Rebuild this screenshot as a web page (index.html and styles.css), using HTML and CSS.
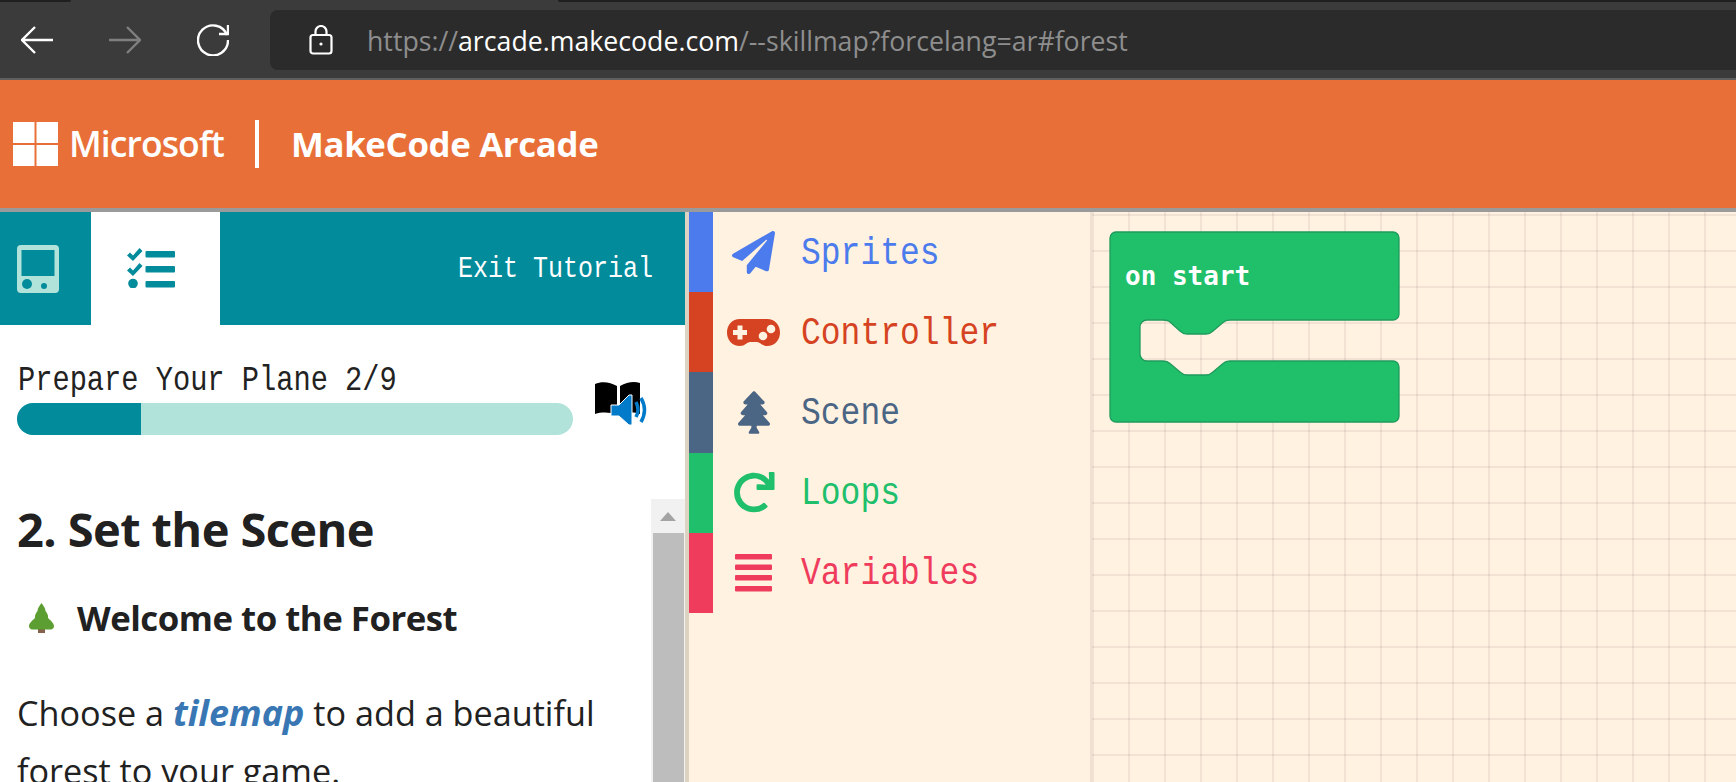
FILE: index.html

```html
<!DOCTYPE html>
<html>
<head>
  <title>MakeCode Arcade</title>
  <link rel="stylesheet" href="styles.css">
</head>
<body>

<div class="browser">
  <div class="tab-strip">
    <div class="tab-dark tab-first"></div>
    <div class="tab-gap"></div>
    <div class="tab-dark tab-rest"></div>
  </div>
  <div class="toolbar">
    <svg class="nav-icon" viewBox="0 0 32 28" fill="none" stroke="#fff" stroke-width="2.4">
      <path d="M1 14H32M14 1L1 14L14 27"/>
    </svg>
    <svg class="nav-icon" viewBox="0 0 32 28" fill="none" stroke="#7f7f7f" stroke-width="2.4">
      <path d="M0 14H31M18 1L31 14L18 27"/>
    </svg>
    <svg class="nav-icon reload" viewBox="0 0 32 32" fill="none" stroke="#fff" stroke-width="2.4">
      <path d="M30 11A15 15 0 1 0 31 16"/>
      <path d="M22 10H31V1"/>
    </svg>
    <div class="address">
      <svg class="lock" viewBox="0 0 24 30" fill="none" stroke="#fff" stroke-width="2.2">
        <rect x="1.5" y="10" width="21" height="18.5" rx="2.5"/>
        <path d="M6.5 10V6.5a5.5 5.5 0 0 1 11 0V10"/>
        <circle cx="12" cy="19" r="1.6" fill="#fff" stroke="none"/>
      </svg>
      <div class="url"><span class="url-dim">https://</span>arcade.makecode.com<span class="url-dim">/--skillmap?forcelang=ar#forest</span></div>
    </div>
  </div>
</div>

<div class="site-header">
  <svg class="ms-logo" viewBox="0 0 45 44" fill="#fff">
    <rect x="0" y="0" width="21.5" height="21"/>
    <rect x="23.5" y="0" width="21.5" height="21"/>
    <rect x="0" y="23" width="21.5" height="21"/>
    <rect x="23.5" y="23" width="21.5" height="21"/>
  </svg>
  <div class="ms-name">Microsoft</div>
  <div class="header-divider"></div>
  <div class="app-name">MakeCode Arcade</div>
</div>

<div class="main">
  <div class="side">
    <div class="side-tabs">
      <div class="side-tab">
        <svg class="device-icon" viewBox="0 0 42 48">
          <rect width="42" height="48" rx="4" fill="#b2e3db"/>
          <rect x="4.5" y="5" width="33" height="26" fill="#028b9b"/>
          <circle cx="10" cy="39" r="5" fill="#028b9b"/>
          <circle cx="27" cy="41" r="3" fill="#028b9b"/>
        </svg>
      </div>
      <div class="side-tab side-tab-active">
        <svg class="check-icon" viewBox="0 0 48 40" fill="#028b9b">
          <path d="M0 7.5L3 4.5L6 7.5L12.500 0L15.500 3L6 13Z"/>
          <path d="M0 22.500L3 19.500L6 22.500L12.500 15L15.500 18L6 28Z"/>
          <circle cx="6" cy="35.500" r="4.800"/>
          <rect x="18.500" y="3" width="29.500" height="6.500" rx="1"/>
          <rect x="18.500" y="18" width="29.500" height="6.500" rx="1"/>
          <rect x="18.500" y="33" width="29.500" height="6.500" rx="1"/>
        </svg>
      </div>
      <div class="exit-link"><span class="mono-text">Exit Tutorial</span></div>
    </div>

    <div class="step-head">
      <div class="step-progress">
        <div class="step-title"><span class="mono-text">Prepare Your Plane 2/9</span></div>
        <div class="progress-bar"><div class="progress-fill" style="width: 22.3%"></div></div>
      </div>
      <svg class="read-icon" viewBox="0 0 54 45">
        <path d="M0 3C7 0 15 1 22 5V34C15 31 7 31 0 33Z" fill="#000"/>
        <path d="M25 5C32 1 39 0 45 2V33C39 31 32 31 25 34Z" fill="#000"/>
        <path d="M16 24H24L34 14H37V44H34L24 35H16Z" fill="#007ac9" stroke="#fff" stroke-width="1"/>
        <path d="M41 21Q45 29 41 36" fill="none" stroke="#007ac9" stroke-width="3.5"/>
        <path d="M46 17Q53 29 46 41" fill="none" stroke="#007ac9" stroke-width="3.5"/>
      </svg>
    </div>

    <div class="step-body">
      <div class="step-text">
        <h1>2. Set the Scene</h1>
        <h2>
          <svg class="tree-emoji" viewBox="0 0 25 30">
            <rect x="9" y="25" width="7" height="5" fill="#85614c"/>
            <path d="M12.500 0C14 2 16.500 5 16.500 8C18 10 19.500 12 19 15C21 17 25 20 25 23C25 26 22 27 19.500 26.500H5.500C3 27 0 26 0 23C0 20 4 17 6 15C5.500 12 7 10 8.500 8C8.500 5 11 2 12.500 0Z" fill="#5c9e31"/>
          </svg>
          Welcome to the Forest
        </h2>
        <p>Choose a <a class="term" href="#">tilemap</a> to add a beautiful forest to your game.</p>
      </div>
      <div class="scrollbar">
        <div class="scroll-button"><div class="scroll-arrow"></div></div>
        <div class="scroll-thumb"></div>
      </div>
    </div>
  </div>

  <div class="splitter"></div>

  <div class="toolbox">
    <div class="category cat-sprites">
      <div class="cat-icon">
        <svg width="43" height="43" viewBox="0 0 512 512" fill="currentColor"><path d="M476 3.2L12.500 270.600c-18.100 10.400-15.800 35.600 2.200 43.200L121 358.400l287.300-253.200c5.500-4.900 13.300 2.600 8.600 8.300L176 407v80.500c0 23.600 28.500 32.900 42.500 15.800L282 426l124.600 52.200c14.200 6 30.400-2.900 33-18.200l72-432C515 7.800 493.300-6.800 476 3.200z"/></svg>
      </div>
      <span class="cat-label">Sprites</span>
    </div>
    <div class="category cat-controller">
      <div class="cat-icon">
        <svg width="53" height="27" viewBox="0 0 53 27">
          <path d="M13 0H40C48 0 53 6 53 13.500C53 21 48 27 40 27C35 27 33 23 30 23H23C20 23 18 27 13 27C5 27 0 21 0 13.500C0 6 5 0 13 0Z" fill="currentColor"/>
          <path d="M10.500 6.500H15.500V11H20V16H15.500V20.500H10.500V16H6V11H10.500Z" fill="#fff2e0"/>
          <circle cx="36" cy="17" r="4.300" fill="#fff2e0"/>
          <circle cx="44" cy="10" r="4.300" fill="#fff2e0"/>
        </svg>
      </div>
      <span class="cat-label">Controller</span>
    </div>
    <div class="category cat-scene">
      <div class="cat-icon">
        <svg width="32" height="43" viewBox="0 0 384 512" fill="currentColor"><path d="M378.310 378.490L298.420 288h30.630c9.010 0 16.980-5 20.780-13.060 3.800-8.040 2.550-17.260-3.280-24.050L268.420 160h28.890c9.100 0 17.300-5.350 20.860-13.610 3.520-8.130 1.860-17.590-4.240-24.080L203.660 4.830c-6.030-6.450-17.280-6.450-23.320 0L70.060 122.310c-6.100 6.490-7.750 15.950-4.240 24.080C69.380 154.650 77.590 160 86.690 160h28.890l-78.140 90.910c-5.810 6.780-7.060 15.990-3.270 24.040C37.970 283 45.930 288 54.950 288h30.630L5.690 378.490c-6 6.790-7.360 16.090-3.560 24.260 3.750 8.050 12 13.250 21.010 13.250H160v24.450l-30.290 48.400c-5.320 10.640 2.420 23.160 14.310 23.160h95.960c11.890 0 19.630-12.520 14.310-23.160L224 440.450V416h136.860c9.010 0 17.260-5.200 21.010-13.250 3.800-8.170 2.440-17.470-3.560-24.260z"/></svg>
      </div>
      <span class="cat-label">Scene</span>
    </div>
    <div class="category cat-loops">
      <div class="cat-icon">
        <svg width="42" height="41" viewBox="0 0 512 512" fill="currentColor"><path d="M500.330 0h-47.410a12 12 0 0 0-12 12.570l4 82.760A247.420 247.420 0 0 0 256 8C119.340 8 8.900 119.530 8 256.190 7.100 393.070 118.100 504 256 504a247.100 247.100 0 0 0 166.180-63.910 12 12 0 0 0 .48-17.430l-34-34a12 12 0 0 0-16.380-.55A176 176 0 1 1 402.100 157.800l-101.530-4.870a12 12 0 0 0-12.570 12v47.410a12 12 0 0 0 12 12h200.330a12 12 0 0 0 12-12V12a12 12 0 0 0-12-12z"/></svg>
      </div>
      <span class="cat-label">Loops</span>
    </div>
    <div class="category cat-variables">
      <div class="cat-icon">
        <svg width="37" height="38" viewBox="0 0 37 38" fill="currentColor">
          <rect y="0" width="37" height="5.500" rx="1"/>
          <rect y="10.500" width="37" height="5.500" rx="1"/>
          <rect y="21" width="37" height="5.500" rx="1"/>
          <rect y="32" width="37" height="5.500" rx="1"/>
        </svg>
      </div>
      <span class="cat-label">Variables</span>
    </div>
  </div>

  <div class="workspace">
    <svg class="block-start" width="291" height="192" viewBox="-1 -1 291 192">
      <path d="M6 0H283a6 6 0 0 1 6 6V82a6 6 0 0 1-6 6H120c-3 0-5 .5-7 2.500L103 99c-2 2-4 3-7 3H77c-3 0-5-1-7-3L60 90c-2-2-4-2-7-2H37a7 7 0 0 0-7 7V122a7 7 0 0 0 7 7H53c3 0 5 .5 7 2.500L70 140c2 2 4 3 7 3H96c3 0 5-1 7-3L113 131.500c2-2 4-2.500 7-2.500H283a6 6 0 0 1 6 6V184a6 6 0 0 1-6 6H6a6 6 0 0 1-6-6V6a6 6 0 0 1 6-6Z" fill="#20c06b" stroke="#1e9a5c" stroke-width="1.300"/>
      <text class="block-text" x="15" y="53">on start</text>
    </svg>
  </div>
</div>

</body>
</html>
```

FILE: styles.css

```css
* {
  box-sizing: border-box;
}
html, body {
  height: 782px;
  overflow: hidden;
}
body {
  margin: 0;
  display: flex;
  flex-direction: column;
  font-family: "Open Sans", "Noto Sans", sans-serif;
  background-color: #fff;
}

/* browser chrome */
.browser {
  height: 80px;
  flex: none;
  background-color: #3b3b3b;
  border-bottom: 2px solid #5f5f5f;
}
.tab-strip {
  display: flex;
  height: 2px;
}
.tab-dark {
  background-color: #1f1f1f;
}
.tab-first {
  width: 71px;
  border-bottom-right-radius: 2px;
}
.tab-gap {
  width: 487px;
}
.tab-rest {
  flex: 1;
  border-bottom-left-radius: 2px;
}
.toolbar {
  display: flex;
  align-items: center;
  height: 76px;
  padding-left: 21px;
}
.nav-icon {
  width: 32px;
  height: 28px;
  margin-right: 56px;
  flex: none;
}
.reload {
  height: 32px;
  margin-right: 41px;
}
.address {
  flex: 1;
  height: 60px;
  display: flex;
  align-items: center;
  padding-left: 39px;
  background-color: #2b2b2b;
  border-radius: 8px 0 0 8px;
}
.lock {
  width: 24px;
  height: 30px;
  margin-right: 34px;
}
.url {
  font-size: 26.7px;
  color: #fff;
  white-space: nowrap;
}
.url-dim {
  color: #8e8e8e;
}

/* orange header */
.site-header {
  height: 128px;
  flex: none;
  display: flex;
  align-items: center;
  padding-left: 13px;
  background-color: #e87038;
  color: #fff;
}
.ms-logo {
  width: 45px;
  height: 44px;
  margin-right: 11px;
}
.ms-name {
  width: 186px;
  padding-bottom: 2px;
  font-size: 35.5px;
  font-weight: 600;
  letter-spacing: -0.9px;
}
.header-divider {
  width: 4px;
  height: 48px;
  margin-right: 32px;
  background-color: #fff;
}
.app-name {
  padding-bottom: 2px;
  font-size: 34.8px;
  font-weight: 700;
  letter-spacing: -0.35px;
}

/* main area */
.main {
  flex: 1;
  display: flex;
  min-height: 0;
  border-top: 4px solid #9a9a9a;
}
.side {
  width: 685px;
  flex: none;
  display: flex;
  flex-direction: column;
  background-color: #fff;
}
.side-tabs {
  display: flex;
  align-items: center;
  height: 113px;
  background-color: #028b9b;
}
.side-tab {
  width: 91px;
  height: 100%;
  display: flex;
  align-items: center;
  justify-content: center;
}
.side-tab-active {
  width: 129px;
  background-color: #fff;
}
.device-icon {
  width: 42px;
  height: 48px;
  margin-right: 15px;
}
.check-icon {
  width: 48px;
  height: 40px;
  margin-right: 9px;
  margin-bottom: 2px;
}
.mono-text {
  display: inline-block;
  font-family: "Liberation Mono", monospace;
  transform: scaleY(1.2);
}
.exit-link {
  margin-left: auto;
  padding: 0 32px 4px 0;
  font-size: 25px;
  color: #fff;
  white-space: nowrap;
}
.step-head {
  display: flex;
  height: 174px;
  flex: none;
  padding: 34px 0 0 17px;
}
.step-progress {
  width: 556px;
}
.step-title {
  height: 44px;
  padding-left: 1px;
  font-size: 28.7px;
  line-height: 38px;
  color: #222;
  white-space: nowrap;
}
.progress-bar {
  height: 32px;
  border-radius: 16px;
  overflow: hidden;
  background-color: #b2e3db;
}
.progress-fill {
  height: 100%;
  background-color: #028b9b;
}
.read-icon {
  width: 54px;
  height: 45px;
  margin: 22px 0 0 22px;
}
.step-body {
  flex: 1;
  display: flex;
  min-height: 0;
}
.step-text {
  flex: 1;
  padding-left: 17px;
  color: #212121;
}
h1 {
  margin: 0;
  padding-top: 1px;
  font-size: 47px;
  font-weight: 700;
  line-height: 58px;
  letter-spacing: -0.6px;
}
h2 {
  display: flex;
  align-items: center;
  margin: 0;
  padding: 38px 0 0 12px;
  font-size: 34.8px;
  font-weight: 700;
  line-height: 44px;
  letter-spacing: -0.5px;
}
.tree-emoji {
  width: 25px;
  height: 30px;
  margin-right: 23px;
}
p {
  margin: 0;
  padding-top: 44px;
  font-size: 34.2px;
  line-height: 57.5px;
}
.term {
  color: #3977b4;
  font-size: 36px;
  font-weight: 700;
  font-style: italic;
  text-decoration: none;
}
.scrollbar {
  width: 34px;
  flex: none;
  display: flex;
  flex-direction: column;
  background-color: #f1f1f1;
}
.scroll-button {
  height: 34px;
  flex: none;
  display: flex;
  align-items: center;
  justify-content: center;
}
.scroll-arrow {
  width: 0;
  height: 0;
  border-left: 8px solid transparent;
  border-right: 8px solid transparent;
  border-bottom: 9px solid #a3a3a3;
}
.scroll-thumb {
  flex: 1;
  margin: 0 1px 0 2px;
  background-color: #bdbdbd;
}
.splitter {
  width: 4px;
  flex: none;
  background-color: #ddd3c3;
}

/* block categories */
.toolbox {
  width: 403px;
  flex: none;
  background-color: #fff2e0;
  border-right: 2px solid #eee0d2;
}
.category {
  display: flex;
  align-items: center;
  height: 80.2px;
  border-left: 24px solid currentColor;
}
.cat-sprites { color: #4b7bec; }
.cat-controller { color: #d54322; }
.cat-scene { color: #4b6584; }
.cat-loops { color: #20bf6b; }
.cat-variables { color: #ef3c5d; }
.cat-icon {
  width: 81px;
  margin-right: 9px;
  display: flex;
  justify-content: center;
}
.cat-label {
  display: inline-block;
  margin-left: -2px;
  font-family: "Liberation Mono", monospace;
  font-size: 33px;
  transform: scaleY(1.2) translateY(1px);
}

/* workspace */
.workspace {
  flex: 1;
  position: relative;
  overflow: hidden;
  background-color: #fff2e0;
  background-image:
    linear-gradient(to right, rgba(120, 90, 100, 0.1) 2px, transparent 2px),
    linear-gradient(to bottom, rgba(120, 90, 100, 0.1) 2px, transparent 2px);
  background-size: 36px 36px;
  background-position: 0 2px;
}
.block-start {
  position: absolute;
  left: 16.5px;
  top: 18.5px;
}
.block-text {
  font-family: "DejaVu Sans Mono", monospace;
  font-size: 26px;
  font-weight: 700;
  fill: #fff;
}
```
